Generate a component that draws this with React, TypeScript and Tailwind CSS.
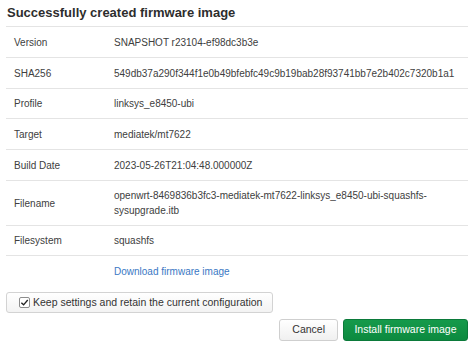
import React, { useState } from "react";

const rows: { label: string; value: React.ReactNode; h: string }[] = [
  { label: "Version", value: "SNAPSHOT r23104-ef98dc3b3e", h: "h-[31px]" },
  { label: "SHA256", value: "549db37a290f344f1e0b49bfebfc49c9b19bab28f93741bb7e2b402c7320b1a1", h: "h-[31px]" },
  { label: "Profile", value: "linksys_e8450-ubi", h: "h-[30px]" },
  { label: "Target", value: "mediatek/mt7622", h: "h-[31px]" },
  { label: "Build Date", value: "2023-05-26T21:04:48.000000Z", h: "h-[31px]" },
  {
    label: "Filename",
    value: (
      <>
        openwrt-8469836b3fc3-mediatek-mt7622-linksys_e8450-ubi-squashfs-
        <br />
        sysupgrade.itb
      </>
    ),
    h: "h-[45px]",
  },
  { label: "Filesystem", value: "squashfs", h: "h-[30px]" },
];

export default function App() {
  const [keep, setKeep] = useState(true);

  return (
    <div className="w-[474px] h-[348px] bg-white text-[#404040] font-['Liberation_Sans',Arial,sans-serif] px-[6px] pt-[4px]">
      <h1 className="text-[13px] font-bold text-[#2d2d2d] leading-[18px] pl-[1px]">
        Successfully created firmware image
      </h1>

      <div className="mt-[4px] w-[462px] border-t border-[#e4e4e4]">
        {rows.map((r) => (
          <div key={r.label} className={`flex items-center border-b border-[#e4e4e4] text-[10px] ${r.h}`}>
            <div className="w-[108px] pl-[8px] shrink-0">{r.label}</div>
            <div className="leading-[15px]">{r.value}</div>
          </div>
        ))}
      </div>

      <div className="pl-[108px] h-[30px] flex items-center text-[10px]">
        <a href="#" className="text-[#3a78c4]">
          Download firmware image
        </a>
      </div>

      <label className="mt-[6px] w-[267px] h-[21px] flex items-center gap-[3px] pl-[12px] border border-[#d3d3d3] rounded-[3px] bg-gradient-to-b from-white to-[#f3f3f3] text-[10.5px] text-[#333] cursor-pointer">
        <span
          onClick={() => setKeep(!keep)}
          className="w-[11px] h-[11px] border border-[#8c8c8c] rounded-[2px] bg-white flex items-center justify-center"
        >
          {keep && (
            <svg width="9" height="9" viewBox="0 0 10 10">
              <path d="M1.5 5.2 L4 7.6 L8.6 2.2" fill="none" stroke="#222" strokeWidth="1.5" />
            </svg>
          )}
        </span>
        <span>Keep settings and retain the current configuration</span>
      </label>

      <div className="mt-[6px] w-[462px] flex justify-end gap-[5px]">
        <button className="h-[22px] px-[12px] border border-[#cfcfcf] rounded-[3px] bg-gradient-to-b from-white to-[#f0f0f0] text-[10.5px] text-[#333]">
          Cancel
        </button>
        <button className="h-[22px] w-[125px] border border-[#0b7a3a] rounded-[3px] bg-gradient-to-b from-[#159a4b] to-[#0c8a3f] text-[10.5px] text-white">
          Install firmware image
        </button>
      </div>
    </div>
  );
}
